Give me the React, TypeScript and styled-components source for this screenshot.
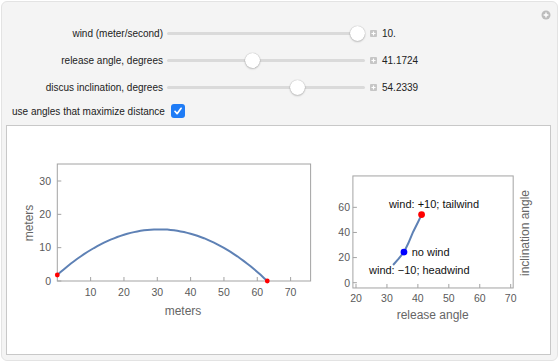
import styled, { createGlobalStyle } from 'styled-components'

const GlobalStyle = createGlobalStyle`
  body {
    margin: 0;
    background: #ffffff;
    font-family: "Liberation Sans", Arial, sans-serif;
  }
`

const Panel = styled.div`
  position: relative;
  box-sizing: border-box;
  width: 557px;
  height: 360px;
  margin: 1px 0 0 1px;
  padding: 18px 6px 5px 0;
  border: 1px solid #e3e3e3;
  border-radius: 6px;
  background: #f4f4f4;
  display: flex;
  flex-direction: column;
`

const CornerButton = styled.svg`
  position: absolute;
  top: 8px;
  right: 6px;
`

const Controls = styled.div`
  display: flex;
  flex-direction: column;
`

const SliderRow = styled.div<{ $h: number }>`
  display: flex;
  align-items: center;
  height: ${(p) => p.$h}px;
`

const Label = styled.div`
  flex-shrink: 0;
  width: 161px;
  text-align: right;
  font-size: 10px;
  color: #222;
`

const Track = styled.div`
  position: relative;
  flex-shrink: 0;
  width: 198px;
  height: 3px;
  margin-left: 4px;
  border-radius: 2px;
  background: #dadada;
`

const Thumb = styled.div`
  position: absolute;
  top: 50%;
  width: 15px;
  height: 15px;
  margin-top: -7.5px;
  border-radius: 50%;
  background: #ffffff;
  box-shadow: 0 0 1px rgba(0, 0, 0, 0.35), 0 1px 2px rgba(0, 0, 0, 0.2);
`

const StepIcon = styled.svg`
  flex-shrink: 0;
  margin-left: 5px;
`

const Value = styled.div`
  margin-left: 5px;
  font-size: 10px;
  color: #222;
`

const CheckRow = styled.div`
  display: flex;
  align-items: center;
  gap: 6px;
  height: 22px;
  padding-left: 10px;
  font-size: 10px;
  color: #222;
`

const CheckBox = styled.div`
  display: flex;
  align-items: center;
  justify-content: center;
  width: 14px;
  height: 14px;
  border-radius: 3px;
  background: #1f7cf6;
`

const Output = styled.div`
  flex: 1;
  display: flex;
  margin: 3px 0 0 4px;
  border: 1px solid #c8c8c8;
  background: #ffffff;
`

const TickLabel = styled.text`
  font-size: 10.5px;
  fill: #5a5a5a;
  font-family: "Liberation Sans", Arial, sans-serif;
`

const AxisLabel = styled.text`
  font-size: 12px;
  fill: #666;
  font-family: "Liberation Sans", Arial, sans-serif;
`

const Note = styled.text`
  font-size: 11px;
  fill: #111;
  font-family: "Liberation Sans", Arial, sans-serif;
`

const sliders = [
  { label: 'wind (meter/second)', frac: 1, value: '10.', h: 27 },
  { label: 'release angle, degrees', frac: 0.427, value: '41.1724', h: 27 },
  { label: 'discus inclination, degrees', frac: 0.671, value: '54.2339', h: 26 },
]

const Plus = () => (
  <StepIcon width="7" height="7" viewBox="0 0 7 7">
    <rect width="7" height="7" rx="1" fill="#c6c6c6" />
    <path d="M3.5 1.5v4M1.5 3.5h4" stroke="#fff" strokeWidth="1.2" />
  </StepIcon>
)

const lx = (v: number) => 50.3 + v * 3.333
const ly = (v: number) => 155 - v * 3.333

const trajectory = Array.from({ length: 64 }, (_, i) => {
  const y = 1.8 + 0.8975 * i - 0.0147 * i * i
  return `${lx(i).toFixed(1)},${ly(Math.max(y, 0)).toFixed(1)}`
}).join(' ')

const DistanceChart = () => (
  <svg width="320" height="228">
    <rect x={lx(0)} y={ly(35.1)} width={lx(76) - lx(0)} height={ly(0) - ly(35.1)} fill="none" stroke="#a3a3a3" />
    {[10, 20, 30, 40, 50, 60, 70].map((v) => (
      <g key={v}>
        <line x1={lx(v)} x2={lx(v)} y1={155} y2={151} stroke="#a3a3a3" />
        <TickLabel x={lx(v)} y={170} textAnchor="middle">
          {v}
        </TickLabel>
      </g>
    ))}
    {[0, 10, 20, 30].map((v) => (
      <g key={v}>
        <line x1={lx(0)} x2={lx(0) + 4} y1={ly(v)} y2={ly(v)} stroke="#a3a3a3" />
        <TickLabel x={44} y={ly(v) + 3.8} textAnchor="end">
          {v}
        </TickLabel>
      </g>
    ))}
    <polyline points={trajectory} fill="none" stroke="#5e81b5" strokeWidth="2" />
    <circle cx={lx(0)} cy={ly(1.8)} r="2.4" fill="#ff0000" />
    <circle cx={lx(63)} cy={ly(0)} r="2.4" fill="#ff0000" />
    <AxisLabel x={176} y={189} textAnchor="middle">
      meters
    </AxisLabel>
    <AxisLabel x={26} y={97} textAnchor="middle" transform="rotate(-90 26 97)">
      meters
    </AxisLabel>
  </svg>
)

const rx = (v: number) => 29 + (v - 20) * 3.094
const ry = (v: number) => 156.7 - v * 1.256

const angleCurve: [number, number][] = [
  [32.0, 14.1],
  [33.8, 19.2],
  [35.5, 24.4],
  [36.9, 31.4],
  [38.5, 40.6],
  [40.1, 48.6],
  [41.2, 54.2],
]

const AngleChart = () => (
  <svg width="222" height="228">
    <rect x={rx(19)} y={ry(85)} width={rx(70.8) - rx(19)} height={ry(-4.2) - ry(85)} fill="none" stroke="#a3a3a3" />
    {[20, 30, 40, 50, 60, 70].map((v) => (
      <g key={v}>
        <line x1={rx(v)} x2={rx(v)} y1={ry(-4.2)} y2={ry(-4.2) - 4} stroke="#a3a3a3" />
        <TickLabel x={rx(v)} y={175.5} textAnchor="middle">
          {v}
        </TickLabel>
      </g>
    ))}
    {[0, 20, 40, 60].map((v) => (
      <g key={v}>
        <line x1={rx(19)} x2={rx(19) + 4} y1={ry(v)} y2={ry(v)} stroke="#a3a3a3" />
        <TickLabel x={23} y={ry(v) + 3.8} textAnchor="end">
          {v}
        </TickLabel>
      </g>
    ))}
    <polyline
      points={angleCurve.map(([a, b]) => `${rx(a).toFixed(1)},${ry(b).toFixed(1)}`).join(' ')}
      fill="none"
      stroke="#5e81b5"
      strokeWidth="2"
      strokeLinejoin="round"
    />
    <circle cx={rx(41.2)} cy={ry(54.2)} r="3.4" fill="#ff0000" />
    <circle cx={rx(35.5)} cy={ry(24.4)} r="3.4" fill="#0000ff" />
    <Note x={107} y={82} textAnchor="middle">
      wind: +10; tailwind
    </Note>
    <Note x={84.7} y={129.5}>
      no wind
    </Note>
    <Note x={42} y={148}>
      wind: −10; headwind
    </Note>
    <AxisLabel x={105.7} y={193} textAnchor="middle">
      release angle
    </AxisLabel>
    <AxisLabel x={202} y={107} textAnchor="middle" transform="rotate(-90 202 107)">
      inclination angle
    </AxisLabel>
  </svg>
)

export default function App() {
  return (
    <>
      <GlobalStyle />
      <Panel>
        <CornerButton width="10" height="10" viewBox="0 0 10 10">
          <circle cx="5" cy="5" r="4.5" fill="#bcbcbc" />
          <path d="M5 2.6v4.8M2.6 5h4.8" stroke="#fff" strokeWidth="1.4" />
        </CornerButton>
        <Controls>
          {sliders.map((s) => (
            <SliderRow key={s.label} $h={s.h}>
              <Label>{s.label}</Label>
              <Track>
                <Thumb style={{ left: `${s.frac * 183}px` }} />
              </Track>
              <Plus />
              <Value>{s.value}</Value>
            </SliderRow>
          ))}
          <CheckRow>
            <span>use angles that maximize distance</span>
            <CheckBox>
              <svg width="10" height="10" viewBox="0 0 10 10">
                <path d="M2 5.3l2.1 2.4 4-5.4" fill="none" stroke="#fff" strokeWidth="1.7" strokeLinecap="round" strokeLinejoin="round" />
              </svg>
            </CheckBox>
          </CheckRow>
        </Controls>
        <Output>
          <DistanceChart />
          <AngleChart />
        </Output>
      </Panel>
    </>
  )
}
